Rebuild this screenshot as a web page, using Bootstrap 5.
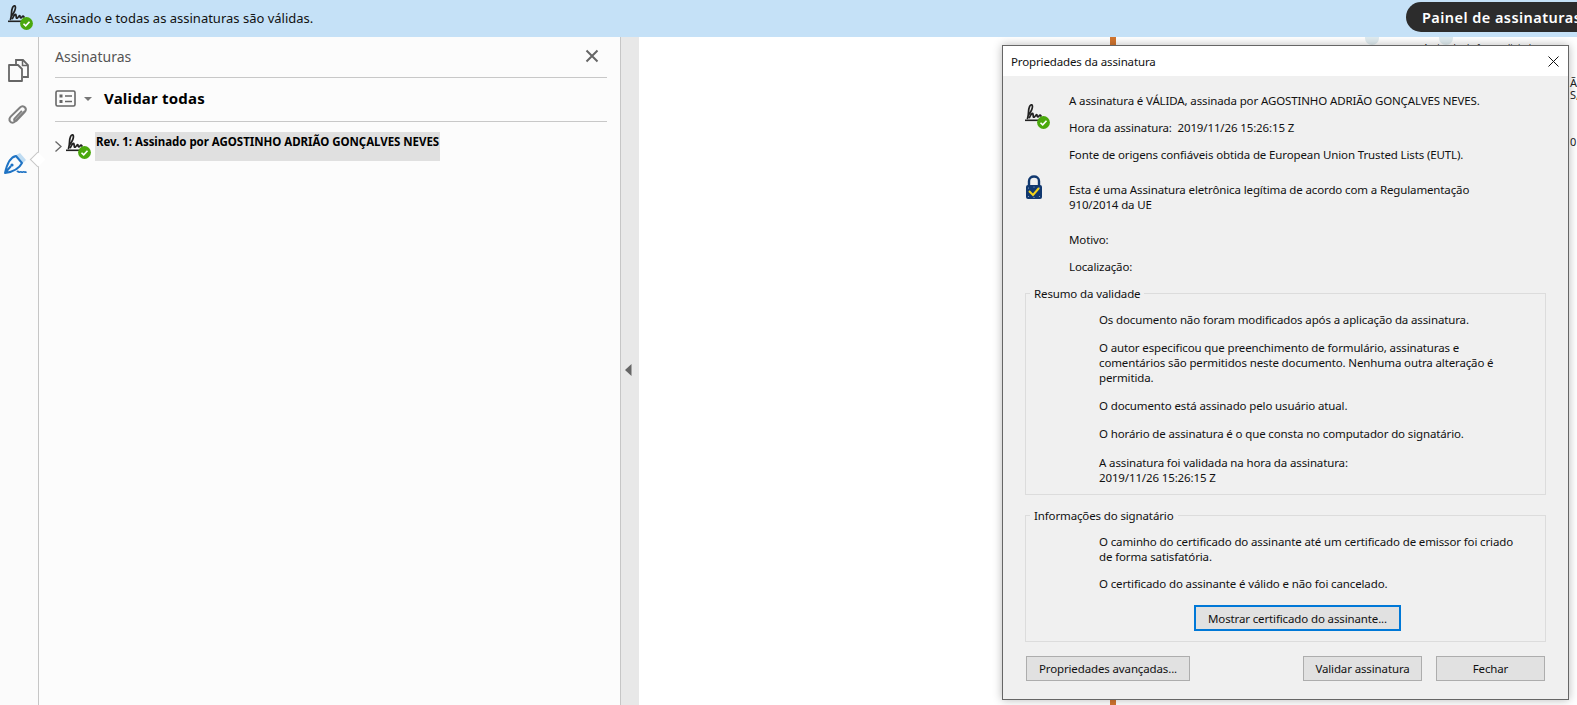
<!doctype html>
<html lang="pt"><head><meta charset="utf-8"><title>Assinaturas</title>
<link href="https://cdn.jsdelivr.net/npm/bootstrap@5.3.0/dist/css/bootstrap.min.css" rel="stylesheet">
<style>
html,body{height:705px;overflow:hidden;background:#fff;color:#000;font-family:"Noto Sans","Open Sans",sans-serif}
.top-banner{height:37px;background:#c5e1f7;flex:none;overflow:hidden}
.banner-sig{margin-left:8px;width:26px;height:26px;margin-top:5px;flex:none}
.banner-msg{margin-left:12px;font-size:13px;color:#111}
.panel-pill{margin-left:auto;margin-top:2px;width:171px;flex:none;height:30px;background:#2c2c2c;color:#fff;border-radius:15px 0 0 15px;padding-left:16px;font-size:14.5px;font-weight:600;letter-spacing:.45px;line-height:30px;white-space:nowrap;overflow:hidden}
.work{height:668px}
.rail{width:39px;flex:none;background:#fbfbfb;border-right:1px solid #c6c6c6;position:relative;padding-top:21px}
.rail svg{display:block;margin-left:4px}
.rail-clip{margin-top:18px}
.rail svg.rail-pen{margin:23px 0 0 2px}
.notch{position:absolute;left:32px;top:117px;width:11px;height:11px;background:#fff;border-left:1px solid #c6c6c6;border-bottom:1px solid #c6c6c6;transform:rotate(45deg)}
.side-panel{width:582px;flex:none;background:#fcfcfc;border-right:1px solid #c6c6c6;padding:0 13px 0 16px}
.panel-title{height:41px;padding-bottom:2px;border-bottom:1px solid #c8c8c8;font-size:14px;color:#555}
.tool-row{height:44px;padding-bottom:2px;border-bottom:1px solid #c8c8c8}
.tool-label{font-size:15px;font-weight:700;margin-left:12px;letter-spacing:.2px}
.sig-row{margin-top:10px;margin-left:-1px}
.sig-label{background:#e0e0e0;height:29px;width:345px;font-size:11.5px;font-weight:700;padding:1px 0 0 1px;letter-spacing:-.04px;white-space:nowrap;margin-left:3px}
.splitter{width:18px;flex:none;background:#e8e8e8}
.doc-area{position:relative;flex:1 1 auto;background:#fff;overflow:hidden}
.orange-rule{position:absolute;left:471px;top:0;width:6px;height:100%;background:#d2752f}
.dot-a,.dot-b{position:absolute;top:-6px;width:14px;height:14px;border-radius:50%;background:#e0ecf0}
.dot-a{left:726px}.dot-b{left:800px}
.doc-txt{position:absolute;font-size:11px;line-height:12px;white-space:nowrap;color:#222}
.doc-sign{font-size:9px;left:784px;top:5px}
.dlg{position:absolute;left:363px;top:8px;width:567px;height:655px;background:#f0f0f0;border:1px solid #666;box-shadow:0 0 9px rgba(0,0,0,.28);font-size:11.5px;line-height:15px;color:#111;letter-spacing:-.13px}
.dlg-title{height:30px;background:#fff;padding-left:8px}
.dlg-body{padding:17px 22px 0 22px}
.ico-col{width:44px;flex:none}
.para{margin:0 0 12px}
.info-block .para:last-child{margin-bottom:0}
.gap-13{margin-bottom:13px}
.fs{border:1px solid #dcdcdc;margin:0;padding:0 0 0 73px;position:relative}
.fs-a{margin-top:12px;height:209px}
.fs-b{margin-top:13px;height:134px}
.fs legend{float:none;width:auto;font-size:11.5px;line-height:15px;margin:0 0 0 -69px;padding:0 4px 0 4px}
.btn-win{background:#e1e1e1;border:1px solid #adadad;border-radius:0;font-size:11.5px;line-height:15px;padding:0;height:25px;color:#111;letter-spacing:-.13px}
.btn-win:hover{background:#e1e1e1;border-color:#adadad}
.btn-focus{border:2px solid #0078d7;width:207px;height:26px;display:block;margin:14px auto 0 95px}
.dlg-foot{margin:14px 1px 0 1px}
.btn-w1{width:164px}.btn-w2{width:119px}.btn-w3{width:109px;margin-left:14px}
</style></head>
<body>
<svg width="0" height="0" class="d-block position-absolute"><defs>
<g id="sig"><path d="M7 1C5 0 3.600 4 3.500 8 3.400 11 3 13 2.500 14.500M7 1C8.500 3 6 8 3.500 11M4.500 13.500C6 10 7.500 8.500 8 10 8.300 12 8 14 9.500 13 11 11.500 11.500 10 12 11 12 13 13 13.500 14 12 15 10.500 15.500 11 16 12" fill="none" stroke="#222" stroke-width="1.700" stroke-linecap="round"/><rect x="0" y="15.500" width="16" height="1.600" fill="#222"/><circle cx="18.500" cy="18.500" r="6.400" fill="#4aa80c"/><path d="M15.500 18.700l2.200 2.200 3.800-4.100" fill="none" stroke="#fff" stroke-width="1.600"/></g>
</defs></svg>
<div class="top-banner d-flex align-items-start">
 <svg class="banner-sig" viewBox="0 0 26 26"><use href="#sig"/></svg>
 <div class="banner-msg align-self-center">Assinado e todas as assinaturas são válidas.</div>
 <div class="panel-pill">Painel de assinaturas</div>
</div>
<div class="work d-flex">
 <div class="rail d-flex flex-column">
  <svg width="26" height="26" viewBox="0 0 26 26"><path d="M12 6V2h7l5 5v12h-5" fill="none" stroke="#666" stroke-width="1.800"/><path d="M18.500 2.500v5h5" fill="none" stroke="#666" stroke-width="1.500"/><path d="M5 7h9l4 4v12H5z" fill="#fbfbfb" stroke="#666" stroke-width="1.800" stroke-linejoin="round"/></svg>
  <svg class="rail-clip" width="26" height="26" viewBox="0 0 26 26"><path d="M21 9l-10 10.500c-2.500 2.500-6 .5-5.500-2.500.1-1 .6-1.700 1.200-2.400L16 5.500c2.800-2.800 6.800.2 5.600 3.200-.3.700-.7 1.200-1.200 1.700l-8 8.300c-1.300 1.200-3-.3-2-1.800l7.500-8" fill="none" stroke="#808080" stroke-width="2"/></svg>
  <svg class="rail-pen" width="28" height="26" viewBox="0 0 28 26"><path d="M14 4l4-2 6 7-3 3z" fill="#bfdcf2"/><path d="M14 5C8 6 5 13 3 22c7-1 14-4 17-10zM3 22l6-7" fill="none" stroke="#1f73c4" stroke-width="2" stroke-linejoin="round"/><circle cx="10" cy="14" r="1.600" fill="#1f73c4"/><path d="M15 21c1.500-1.800 1.500 1 3 0s1.500 1 3 0 1.500 1 3.500-.3" fill="none" stroke="#1f73c4" stroke-width="1.700"/></svg>
  <div class="notch"></div>
 </div>
 <div class="side-panel">
  <div class="panel-title d-flex align-items-center justify-content-between">
   <span>Assinaturas</span>
   <svg width="14" height="14" viewBox="0 0 14 14" style="margin-right:8px"><path d="M1.500 1.500l11 11M12.500 1.500l-11 11" stroke="#666" stroke-width="2"/></svg>
  </div>
  <div class="tool-row d-flex align-items-center">
   <svg width="21" height="17" viewBox="0 0 21 17"><rect x="1" y="1" width="19" height="15" rx="1.500" fill="none" stroke="#666" stroke-width="1.600"/><path d="M4.500 4.500h3v3h-3zM4.500 10h3v3h-3z" fill="#666"/><path d="M10 6h7M10 11.500h7" stroke="#666" stroke-width="1.700"/></svg>
   <svg width="8" height="4" viewBox="0 0 8 4" class="ms-2"><path d="M0 0h8L4 4z" fill="#777"/></svg>
   <span class="tool-label">Validar todas</span>
  </div>
  <div class="sig-row d-flex align-items-start">
   <svg width="9" height="13" viewBox="0 0 9 13" class="mt-2"><path d="M1.500 1.500l5.500 5-5.500 5" fill="none" stroke="#666" stroke-width="1.300"/></svg>
   <svg width="26" height="28" viewBox="0 0 26 28" style="margin-left:3px"><use href="#sig" transform="translate(0,2)"/></svg>
   <div class="sig-label">Rev. 1: Assinado por AGOSTINHO ADRIÃO GONÇALVES NEVES</div>
  </div>
 </div>
 <div class="splitter d-flex align-items-center">
  <svg width="7" height="12" viewBox="0 0 7 12" class="ms-1" style="margin-top:-2px"><path d="M6.500 0v12L0 6z" fill="#666"/></svg>
 </div>
 <div class="doc-area">
  <div class="orange-rule"></div><div class="dot-a"></div><div class="dot-b"></div>
  <div class="doc-txt doc-sign">Assinado de forma digital por</div>
  <div class="doc-txt" style="left:931px;top:40px">Ão</div>
  <div class="doc-txt" style="left:931px;top:52px">S,</div>
  <div class="doc-txt" style="left:931px;top:99px">0</div>
  <div class="dlg">
   <div class="dlg-title d-flex align-items-center justify-content-between">
    <span>Propriedades da assinatura</span>
    <svg width="11" height="11" viewBox="0 0 11 11" style="margin-right:9px"><path d="M.5.500l10 10M10.500.500l-10 10" stroke="#111" stroke-width="1"/></svg>
   </div>
   <div class="dlg-body">
    <div class="d-flex info-block">
     <div class="ico-col">
      <svg width="26" height="26" viewBox="0 0 26 26" class="d-block" style="margin-top:11px"><use href="#sig"/></svg>
      <svg width="18" height="25" viewBox="0 0 18 25" class="d-block" style="margin:45px 0 0 0"><path d="M4 11V6c0-6 10-6 10 0v5" fill="none" stroke="#11386f" stroke-width="2.400"/><rect x="1" y="10" width="16" height="14" rx="2" fill="#11386f"/><path d="M4 16l4 4 6-7" fill="none" stroke="#f3d21a" stroke-width="2"/><g fill="#8fa9cf"><circle cx="3.500" cy="13" r=".6"/><circle cx="14.500" cy="13" r=".6"/><circle cx="3.500" cy="21.500" r=".6"/><circle cx="14.500" cy="21.500" r=".6"/><circle cx="9" cy="12" r=".6"/><circle cx="9" cy="22.500" r=".6"/></g></svg>
     </div>
     <div>
      <p class="para">A assinatura é VÁLIDA, assinada por AGOSTINHO ADRIÃO GONÇALVES NEVES.</p>
      <p class="para">Hora da assinatura:&nbsp; 2019/11/26 15:26:15 Z</p>
      <p class="para" style="margin-bottom:20px">Fonte de origens confiáveis obtida de European Union Trusted Lists (EUTL).</p>
      <p class="para" style="margin-bottom:20px">Esta é uma Assinatura eletrônica legítima de acordo com a Regulamentação<br>910/2014 da UE</p>
      <p class="para">Motivo:</p>
      <p class="para">Localização:</p>
     </div>
    </div>
    <fieldset class="fs fs-a">
     <legend>Resumo da validade</legend>
     <div class="info-block" style="padding-top:11px">
      <p class="para gap-13">Os documento não foram modificados após a aplicação da assinatura.</p>
      <p class="para gap-13">O autor especificou que preenchimento de formulário, assinaturas e<br>comentários são permitidos neste documento. Nenhuma outra alteração é<br>permitida.</p>
      <p class="para gap-13">O documento está assinado pelo usuário atual.</p>
      <p class="para" style="margin-bottom:14px">O horário de assinatura é o que consta no computador do signatário.</p>
      <p class="para">A assinatura foi validada na hora da assinatura:<br>2019/11/26 15:26:15 Z</p>
     </div>
    </fieldset>
    <fieldset class="fs fs-b">
     <legend>Informações do signatário</legend>
     <div class="info-block" style="padding-top:11px">
      <p class="para">O caminho do certificado do assinante até um certificado de emissor foi criado<br>de forma satisfatória.</p>
      <p class="para">O certificado do assinante é válido e não foi cancelado.</p>
     </div>
     <button type="button" class="btn btn-win btn-focus">Mostrar certificado do assinante...</button>
    </fieldset>
    <div class="d-flex dlg-foot">
     <button type="button" class="btn btn-win btn-w1">Propriedades avançadas...</button>
     <button type="button" class="btn btn-win btn-w2 ms-auto">Validar assinatura</button>
     <button type="button" class="btn btn-win btn-w3">Fechar</button>
    </div>
   </div>
  </div>
 </div>
</div>
<script src="https://cdn.jsdelivr.net/npm/bootstrap@5.3.0/dist/js/bootstrap.bundle.min.js"></script>
</body></html>
